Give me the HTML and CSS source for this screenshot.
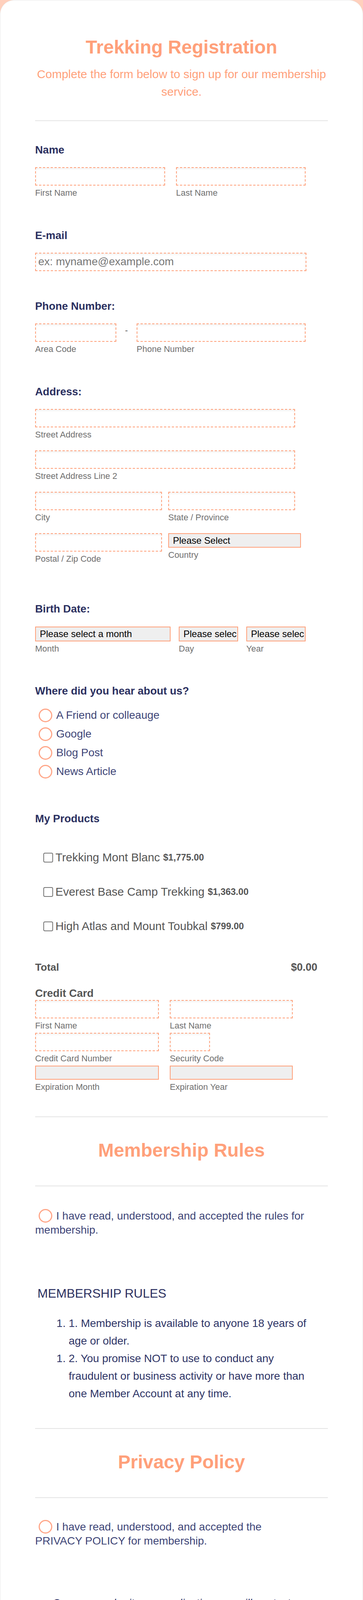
FILE: index.html
```html
<!DOCTYPE html>
<html lang="en">
<head>
  <meta charset="UTF-8" />
  <meta name="viewport" content="width=device-width, initial-scale=1.0" />
  <title>Trekking Registration</title>
  <link rel="stylesheet" href="styles.css">
</head>
<body>
  <form class="card">

    <!-- Header -->
    <h1 class="title">Trekking Registration</h1>
    <p class="subtitle">Complete the form below to sign up for our membership service.</p>
    <hr class="divider">

    <!-- Name -->
    <div class="field field--name">
      <label class="label">Name</label>
      <div class="row gap-28">
        <div class="col w-333"><input class="text" type="text"><span class="sub">First Name</span></div>
        <div class="col w-332"><input class="text" type="text"><span class="sub">Last Name</span></div>
      </div>
    </div>

    <!-- E-mail -->
    <div class="field field--email">
      <label class="label">E-mail</label>
      <div class="row">
        <input class="text w-695" type="email" placeholder="ex: myname@example.com">
      </div>
    </div>

    <!-- Phone -->
    <div class="field field--phone">
      <label class="label">Phone Number:</label>
      <div class="row">
        <div class="col w-208"><input class="text" type="text"><span class="sub">Area Code</span></div>
        <span class="dash">-</span>
        <div class="col w-433"><input class="text" type="text"><span class="sub">Phone Number</span></div>
      </div>
    </div>

    <!-- Address -->
    <div class="field field--address">
      <label class="label">Address:</label>
      <div class="row">
        <div class="col w-666"><input class="text" type="text"><span class="sub">Street Address</span></div>
      </div>
      <div class="row row--next">
        <div class="col w-666"><input class="text" type="text"><span class="sub">Street Address Line 2</span></div>
      </div>
      <div class="row row--next gap-16">
        <div class="col w-325"><input class="text" type="text"><span class="sub">City</span></div>
        <div class="col w-325"><input class="text" type="text"><span class="sub">State / Province</span></div>
      </div>
      <div class="row row--next gap-16">
        <div class="col w-325"><input class="text" type="text"><span class="sub">Postal / Zip Code</span></div>
        <div class="col w-340"><div class="pick">Please Select</div><span class="sub">Country</span></div>
      </div>
    </div>

    <!-- Birth date -->
    <div class="field field--birth">
      <label class="label">Birth Date:</label>
      <div class="row row--birth gap-21">
        <div class="col w-347"><div class="pick pick--tall">Please select a month</div><span class="sub">Month</span></div>
        <div class="col w-152"><div class="pick pick--tall">Please selec</div><span class="sub">Day</span></div>
        <div class="col w-152"><div class="pick pick--tall">Please selec</div><span class="sub">Year</span></div>
      </div>
    </div>

    <!-- Where did you hear -->
    <div class="field field--where">
      <label class="label">Where did you hear about us?</label>
      <div class="options">
        <label class="option"><input class="radio" type="radio" name="hear">A Friend or colleauge</label>
        <label class="option"><input class="radio" type="radio" name="hear">Google</label>
        <label class="option"><input class="radio" type="radio" name="hear">Blog Post</label>
        <label class="option"><input class="radio" type="radio" name="hear">News Article</label>
      </div>
    </div>

    <!-- Products -->
    <div class="field field--products">
      <label class="label">My Products</label>
      <div class="products">
        <label class="product"><input class="check" type="checkbox">Trekking Mont Blanc <b class="price">$1,775.00</b></label>
        <label class="product"><input class="check" type="checkbox">Everest Base Camp Trekking <b class="price">$1,363.00</b></label>
        <label class="product"><input class="check" type="checkbox">High Atlas and Mount Toubkal <b class="price">$799.00</b></label>
      </div>
    </div>

    <div class="total">
      <span>Total</span>
      <span>$0.00</span>
    </div>

    <!-- Credit card -->
    <div class="field field--card">
      <label class="label label--grey">Credit Card</label>
      <div class="row row--tight gap-28">
        <div class="col w-317"><input class="text" type="text"><span class="sub">First Name</span></div>
        <div class="col w-315"><input class="text" type="text"><span class="sub">Last Name</span></div>
      </div>
      <div class="row row--tight-next gap-28">
        <div class="col w-317"><input class="text" type="text"><span class="sub">Credit Card Number</span></div>
        <div class="col w-315"><input class="text w-103" type="text"><span class="sub">Security Code</span></div>
      </div>
      <div class="row row--tight-next gap-28">
        <div class="col w-317"><div class="pick pick--short"></div><span class="sub">Expiration Month</span></div>
        <div class="col w-315"><div class="pick pick--short"></div><span class="sub">Expiration Year</span></div>
      </div>
    </div>

    <!-- Membership rules -->
    <hr class="divider divider--after-card">
    <h2 class="section-title">Membership Rules</h2>
    <hr class="divider divider--under-title">

    <label class="agree agree--rules"><input class="radio radio--inline" type="radio">I have read, understood, and accepted the rules for membership.</label>

    <h3 class="rules-title">MEMBERSHIP RULES</h3>
    <ol class="rules">
      <li value="1">1. Membership is available to anyone 18 years of age or older.</li>
      <li value="1">2. You promise NOT to use to conduct any fraudulent or business activity or have more than one Member Account at any time.</li>
    </ol>

    <!-- Privacy -->
    <hr class="divider divider--after-rules">
    <h2 class="section-title">Privacy Policy</h2>
    <hr class="divider divider--under-title">

    <label class="agree agree--privacy"><input class="radio radio--inline" type="radio">I have read, understood, and accepted the PRIVACY POLICY for membership.</label>

    <p class="closing">Once you submit your application, we will contact you shortly to complete your membership application.</p>
    <p class="closing closing--thanks">Thank you!</p>

    <div class="actions">
      <button type="submit" class="submit">Submit Application</button>
    </div>
  </form>
</body>
</html>
```

FILE: styles.css
```css
/* ---------- Base ---------- */
*, *::before, *::after { box-sizing: border-box; margin: 0; padding: 0; }
html, body {
  font-family: "Liberation Sans", Arial, sans-serif;
  background: linear-gradient(180deg, #ffd0bd 0%, #ffc1a7 45%, #ffa98b 99.1%,
              #2f3a6b 99.2%, #2f3a6b 99.55%, #ff9f7f 99.6%);
}
body { margin: 0; }

/* ---------- Card ---------- */
.card {
  display: block;
  width: 930px;
  background: #fff;
  border: 1px solid #e9e9e9;
  border-radius: 36px;
  padding: 0 89px 70px;
}

/* ---------- Header ---------- */
.title {
  margin-top: 91px;
  font-size: 48px; line-height: 58px; font-weight: 700;
  color: #ffa07a; text-align: center;
}
.subtitle {
  margin-top: 17px;
  font-size: 30px; line-height: 45px;
  color: #ffa07a; text-align: center;
}
.divider { border: none; height: 2px; background: #e4e4e4; margin-top: 51px; }
.divider--after-card { margin-top: 62.5px; }
.divider--after-rules { margin-top: 66px; }
.divider--under-title { margin-top: 60.6px; }

/* ---------- Fields ---------- */
.field--name     { margin-top: 56.5px; }
.field--email    { margin-top: 79px; }
.field--phone    { margin-top: 73px; }
.field--address  { margin-top: 79px; }
.field--birth    { margin-top: 98px; }
.field--where    { margin-top: 77.5px; }
.field--products { margin-top: 79.5px; }
.field--card     { margin-top: 32.5px; }

.label {
  display: block;
  font-size: 27.5px; line-height: 34px; font-weight: 700;
  color: #2b3060;
}
.label--grey { color: #555; }

.row { display: flex; align-items: flex-start; margin-top: 27px; }
.row--next { margin-top: 27px; }
.row--birth { margin-top: 28.5px; }
.row--tight { margin-top: 0; }
.row--tight-next { margin-top: 5px; }
.gap-16 { gap: 16px; }
.gap-21 { gap: 21px; }
.gap-28 { gap: 28px; }

.col { display: flex; flex-direction: column; }
.w-103 { width: 103px; }
.w-152 { width: 152px; }
.w-208 { width: 208px; }
.w-315 { width: 315px; }
.w-317 { width: 317px; }
.w-325 { width: 325px; }
.w-332 { width: 332px; }
.w-333 { width: 333px; }
.w-340 { width: 340px; }
.w-347 { width: 347px; }
.w-433 { width: 433px; }
.w-666 { width: 666px; }
.w-695 { width: 695px; }

.text {
  height: 47px;
  border: 2px dashed #ffa07a;
  background: #fff;
  box-shadow: inset 0 3px 4px rgba(0,0,0,.05);
  padding: 0 6px;
  font: 28px "Liberation Sans", Arial, sans-serif;
  color: #333;
  outline: none;
}
.col > .text:not(.w-103) { width: 100%; }
.text::placeholder { color: #777; }

/* select look-alike */
.pick {
  width: 100%; height: 37px;
  border: 2px solid #ffa07a;
  background: #efefef;
  padding-left: 10px;
  font-size: 24px; line-height: 33px;
  color: #000;
  white-space: nowrap;
}
.pick--tall { height: 38px; line-height: 34px; }
.pick--short { height: 36px; }

.sub {
  margin-top: 5px;
  font-size: 22px; line-height: 27px;
  color: #6f6f6f;
}
.dash {
  width: 52px; text-align: center;
  font-size: 22px; line-height: 36px;
  color: #555;
}

/* ---------- Radios ---------- */
.options { margin-top: 21.5px; }
.option {
  display: flex; align-items: center;
  height: 48px; padding-left: 9px;
  font-size: 28px; color: #3e4577;
}
.radio {
  -webkit-appearance: none; appearance: none;
  width: 35px; height: 35px; flex: none;
  border: 3px solid #ffa688; border-radius: 50%;
  background: #fff;
  margin-right: 10px;
}
.radio--inline { display: inline-block; vertical-align: -8px; margin-left: 9px; }

/* ---------- Products ---------- */
.products { margin-top: 38.5px; }
.product {
  display: flex; align-items: center;
  height: 88px; padding-left: 21px;
  font-size: 29.5px; color: #555;
  white-space: pre;
}
.check {
  -webkit-appearance: none; appearance: none;
  width: 25px; height: 25px; flex: none;
  border: 2px solid #767676; border-radius: 4px;
  background: #fff;
  margin-right: 6px;
}
.price { font-size: 23.5px; font-weight: 700; }

.total {
  display: flex; justify-content: space-between;
  width: 723px; margin-top: 44px;
  font-size: 26.5px; line-height: 34px; font-weight: 700;
  color: #555;
}
.total span:last-child { font-size: 27px; }

/* ---------- Sections ---------- */
.section-title {
  margin-top: 56.4px;
  font-size: 48px; line-height: 58px; font-weight: 700;
  color: #ffa07a; text-align: center;
}
.agree {
  display: block; width: 705px;
  font-size: 28px; line-height: 36px;
  color: #3e4577;
}
.agree--rules { margin-top: 58.4px; }
.agree--privacy { margin-top: 56px; }

.rules-title {
  margin-top: 123.6px; padding-left: 6px;
  font-size: 32px; line-height: 40px; font-weight: 400;
  color: #2b3060;
}
.rules {
  margin-top: 34px; width: 711px; padding-left: 86px;
  font-size: 28px; line-height: 45px;
  color: #2e3466;
}

.closing {
  margin-top: 118px;
  font-size: 28px; line-height: 45px; font-style: italic;
  color: #2e3466; text-align: center;
}
.closing--thanks { margin-top: 29px; }

/* ---------- Submit ---------- */
.actions { display: flex; justify-content: center; margin-top: 132px; padding-right: 2px; }
.submit {
  width: 296px; height: 72px;
  border: 2px solid #d3d3d6; border-radius: 6px;
  background: linear-gradient(#fafafa, #efefef);
  box-shadow: 0 3px 0 #c9c8d0;
  font: 27.5px "Liberation Sans", Arial, sans-serif;
  color: #666;
  cursor: pointer;
}
.submit:hover { background: #eaeaea; }
```
